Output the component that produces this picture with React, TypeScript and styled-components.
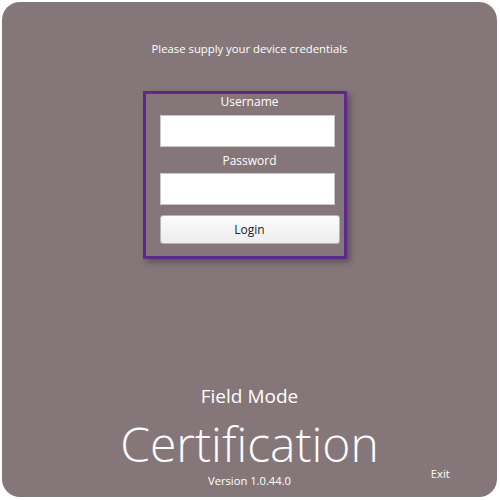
import styled, { createGlobalStyle } from "styled-components";

const GlobalStyle = createGlobalStyle`
  html, body {
    margin: 0;
    padding: 0;
    background: #ffffff;
    font-family: "Open Sans", "Noto Sans", sans-serif;
  }
`;

const Screen = styled.div`
  width: 500px;
  height: 500px;
  padding: 2px 3px 3px 2px;
  box-sizing: border-box;
`;

const Panel = styled.div`
  height: 100%;
  background: #857779;
  border-radius: 18px;
  display: flex;
  flex-direction: column;
  align-items: center;
  color: #ffffff;
`;

const Prompt = styled.div`
  margin-top: 39px;
  font-size: 11.3px;
  line-height: 16px;
`;

const LoginBox = styled.div`
  margin-top: 34px;
  margin-right: 10px;
  width: 204px;
  box-sizing: border-box;
  border: 3px solid #5d2a8c;
  box-shadow: 3px 3px 6px rgba(40, 30, 35, 0.45);
  padding: 0 4px 12px 14px;
  display: flex;
  flex-direction: column;
`;

const FieldLabel = styled.div<{ $first?: boolean }>`
  font-size: 12px;
  line-height: 16px;
  text-align: center;
  margin-top: ${(p) => (p.$first ? "0" : "6px")};
  margin-bottom: ${(p) => (p.$first ? "5px" : "4px")};
`;

const Input = styled.input`
  width: 175px;
  height: 32px;
  box-sizing: border-box;
  border: 1px solid #c8c8c8;
  background: #ffffff;
  margin: 0;
  outline: none;
`;

const LoginButton = styled.button`
  margin-top: 10px;
  width: 180px;
  height: 29px;
  box-sizing: border-box;
  border: 1px solid #b5b5b5;
  border-radius: 3px;
  background: linear-gradient(#fcfcfc, #ececec);
  font-family: "Open Sans", "Noto Sans", sans-serif;
  font-size: 12px;
  color: #222222;
  padding: 0;
`;

const Spacer = styled.div`
  flex: 1;
`;

const Footer = styled.div`
  width: 100%;
  display: grid;
  grid-template-columns: 1fr auto 1fr;
  align-items: end;
  padding-bottom: 8px;
`;

const TitleBlock = styled.div`
  grid-column: 2;
  display: flex;
  flex-direction: column;
  align-items: center;
`;

const Mode = styled.div`
  font-size: 19px;
  line-height: 24px;
  margin-bottom: 11px;
`;

const Product = styled.div`
  font-size: 48px;
  line-height: 50px;
  font-weight: 300;
  margin-bottom: 4px;
`;

const Version = styled.div`
  font-size: 11.2px;
  line-height: 16px;
`;

const ExitLink = styled.div`
  grid-column: 3;
  justify-self: start;
  margin-left: 52px;
  margin-bottom: 7px;
  font-size: 11.2px;
  line-height: 16px;
`;

export default function App() {
  return (
    <>
      <GlobalStyle />
      <Screen>
        <Panel>
          <Prompt>Please supply your device credentials</Prompt>
          <LoginBox>
            <FieldLabel $first>Username</FieldLabel>
            <Input type="text" />
            <FieldLabel>Password</FieldLabel>
            <Input type="password" />
            <LoginButton>Login</LoginButton>
          </LoginBox>
          <Spacer />
          <Footer>
            <TitleBlock>
              <Mode>Field Mode</Mode>
              <Product>Certification</Product>
              <Version>Version 1.0.44.0</Version>
            </TitleBlock>
            <ExitLink>Exit</ExitLink>
          </Footer>
        </Panel>
      </Screen>
    </>
  );
}
